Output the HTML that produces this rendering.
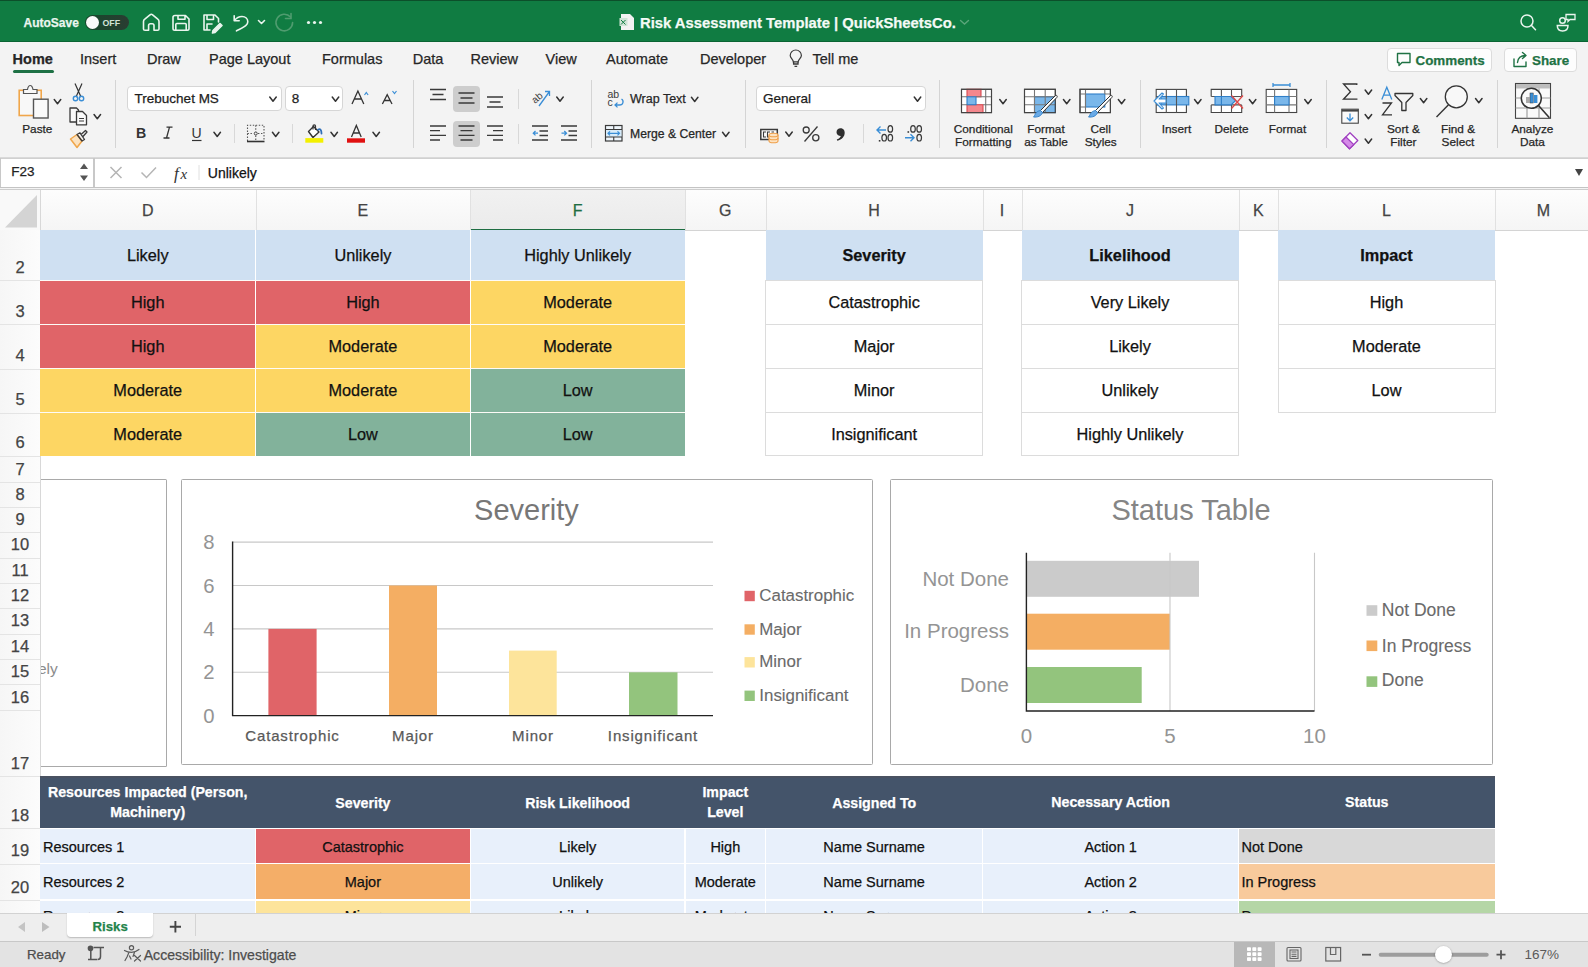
<!DOCTYPE html><html><head><meta charset="utf-8"><style>
html,body{margin:0;padding:0;}
body{width:1588px;height:967px;overflow:hidden;position:relative;background:#fff;font-family:"Liberation Sans",sans-serif;}
.t{position:absolute;white-space:nowrap;line-height:1;transform:translateY(-50%);-webkit-text-stroke:0.25px currentColor;}
.t.c{transform:translate(-50%,-50%);}
.t.r{transform:translate(-100%,-50%);}
svg{position:absolute;overflow:visible;}
</style></head><body>
<div style="position:absolute;left:0px;top:0px;width:1588px;height:42px;background:#107c42;"></div>
<div style="position:absolute;left:0px;top:0px;width:1588px;height:1px;background:#0c4f2a;"></div>
<div style="position:absolute;left:0px;top:41px;width:1588px;height:1px;background:#0a6433;"></div>
<div class="t" style="left:23.5px;top:22.5px;font-size:12px;color:#eaf5ee;font-weight:bold;">AutoSave</div>
<div style="position:absolute;left:85px;top:15px;width:44px;height:15px;background:linear-gradient(to right,#15482b,#2a3d32);border-radius:8px;"></div>
<div style="position:absolute;left:86px;top:16px;width:13px;height:13px;background:#fafafa;border-radius:50%;"></div>
<div class="t" style="left:102.5px;top:23px;font-size:8.8px;color:#d2e3d8;font-weight:bold;-webkit-text-stroke:0;">OFF</div>
<svg style="left:0;top:0" width="1588" height="42" viewBox="0 0 1588 42">
<g fill="none" stroke="#eaf5ee" stroke-width="1.6" stroke-linejoin="round" stroke-linecap="round">
 <path d="M143.5 21.5 C143.5 20.5 144 19.8 144.8 19.2 L150 14.8 C150.8 14.1 151.8 14.1 152.6 14.8 L157.8 19.2 C158.6 19.8 159 20.5 159 21.5 V29 C159 29.8 158.4 30.3 157.6 30.3 H154 V25.5 C154 24.5 153.2 23.8 152.2 23.8 H150.4 C149.4 23.8 148.6 24.5 148.6 25.5 V30.3 H145 C144.1 30.3 143.5 29.8 143.5 29 Z"/>
 <path d="M175 15.5 H185.5 L189 19 V28.5 C189 29.5 188.3 30.2 187.3 30.2 H174.7 C173.7 30.2 173 29.5 173 28.5 V17.2 C173 16.2 173.8 15.5 175 15.5 Z M178 15.5 V19.3 H185 V15.5 M175.8 30.2 V24.5 C175.8 23.9 176.2 23.5 176.8 23.5 H185.2 C185.8 23.5 186.2 23.9 186.2 24.5 V30.2"/>
 <path d="M204 15 H215 L218.5 18.5 V22 M204 15 V30 H210 M207 15 V19.5 H213.5 V15 M207 30 V24 H212"/>
 <path d="M213 30.5 L220 23.5 L222 25.5 L215 32.5 L212.5 33 Z" fill="#eaf5ee"/>
 <path d="M234.2 15.8 V20.8 H239.2 M234.5 20.5 C236.5 17.8 239 16.5 242 16.5 C245.5 16.5 247.8 18.8 247.8 21.8 C247.8 24.5 246 26.5 236.5 30.8"/>
 <path d="M258.5 20.5 L261.5 23.5 L264.5 20.5"/>
</g>
<g fill="none" stroke="#4f9c6f" stroke-width="1.6" stroke-linecap="round">
 <path d="M290.5 17 A8.3 8.3 0 1 0 292.6 22.6"/><path d="M285.5 18.5 H291 V13.5"/>
</g>
<g fill="#eaf5ee"><circle cx="308.5" cy="22.5" r="1.6"/><circle cx="314.5" cy="22.5" r="1.6"/><circle cx="320.5" cy="22.5" r="1.6"/></g>
<g fill="none" stroke="#eaf5ee" stroke-width="1.5" stroke-linecap="round">
 <circle cx="1527" cy="21" r="6"/><path d="M1531.3 25.3 L1535.5 29.8"/>
 <circle cx="1562.5" cy="20.5" r="2.8"/><path d="M1557.3 25.5 H1568 C1568 29 1566 31 1562.6 31 C1559.3 31 1557.3 29 1557.3 25.5 Z"/>
 <path d="M1566 14.5 H1575 V19.5 H1570 L1568 21.5 V19.5 H1566 Z" stroke-width="1.3"/>
</g>
<g>
 <path d="M621 14 H630 L634 18 V30 H621 Z" fill="#f2f2f2"/>
 <rect x="619.5" y="18" width="8" height="8" fill="#cfe3d6"/>
 <path d="M621 20 L625.5 24.5 M625.5 20 L621 24.5" stroke="#107c41" stroke-width="1"/>
</g>
<path d="M960.5 20.5 L964.5 24 L968.5 20.5" fill="none" stroke="#5aa57a" stroke-width="1.4" stroke-linecap="round"/>
</svg>
<div class="t" style="left:640px;top:23px;font-size:14.8px;color:#f4faf6;font-weight:bold;">Risk Assessment Template | QuickSheetsCo.</div>
<div style="position:absolute;left:0px;top:42px;width:1588px;height:115px;background:#f3f3f3;"></div>
<div style="position:absolute;left:0px;top:157px;width:1588px;height:1px;background:#d9d9d9;"></div>
<div class="t" style="left:12.6px;top:58.5px;font-size:14.5px;color:#262626;font-weight:bold;">Home</div>
<div class="t" style="left:80px;top:58.5px;font-size:14.5px;color:#262626;font-weight:normal;">Insert</div>
<div class="t" style="left:147px;top:58.5px;font-size:14.5px;color:#262626;font-weight:normal;">Draw</div>
<div class="t" style="left:209px;top:58.5px;font-size:14.5px;color:#262626;font-weight:normal;">Page Layout</div>
<div class="t" style="left:322px;top:58.5px;font-size:14.5px;color:#262626;font-weight:normal;">Formulas</div>
<div class="t" style="left:412.8px;top:58.5px;font-size:14.5px;color:#262626;font-weight:normal;">Data</div>
<div class="t" style="left:470.5px;top:58.5px;font-size:14.5px;color:#262626;font-weight:normal;">Review</div>
<div class="t" style="left:545.6px;top:58.5px;font-size:14.5px;color:#262626;font-weight:normal;">View</div>
<div class="t" style="left:606px;top:58.5px;font-size:14.5px;color:#262626;font-weight:normal;">Automate</div>
<div class="t" style="left:700px;top:58.5px;font-size:14.5px;color:#262626;font-weight:normal;">Developer</div>
<div style="position:absolute;left:12.5px;top:70px;width:41px;height:3px;background:#1e7145;border-radius:2px;"></div>
<div class="t" style="left:812.5px;top:58.5px;font-size:14.5px;color:#262626;font-weight:normal;">Tell me</div>
<div style="position:absolute;left:1387px;top:48px;width:105px;height:24px;background:#fdfdfd;border:1px solid #dcdcdc;border-radius:4px;box-sizing:border-box;"></div>
<div style="position:absolute;left:1504px;top:48px;width:72.5px;height:24px;background:#fdfdfd;border:1px solid #dcdcdc;border-radius:4px;box-sizing:border-box;"></div>
<div class="t" style="left:1415.5px;top:60.5px;font-size:13.4px;color:#1f7244;font-weight:bold;">Comments</div>
<div class="t" style="left:1532px;top:60.5px;font-size:13.4px;color:#1f7244;font-weight:bold;">Share</div>
<div style="position:absolute;left:115px;top:80px;width:1px;height:68px;background:#d4d4d4;"></div>
<div style="position:absolute;left:413px;top:80px;width:1px;height:68px;background:#d4d4d4;"></div>
<div style="position:absolute;left:591px;top:80px;width:1px;height:68px;background:#d4d4d4;"></div>
<div style="position:absolute;left:745px;top:80px;width:1px;height:68px;background:#d4d4d4;"></div>
<div style="position:absolute;left:939px;top:80px;width:1px;height:68px;background:#d4d4d4;"></div>
<div style="position:absolute;left:1140px;top:80px;width:1px;height:68px;background:#d4d4d4;"></div>
<div style="position:absolute;left:1326px;top:80px;width:1px;height:68px;background:#d4d4d4;"></div>
<div style="position:absolute;left:1497px;top:80px;width:1px;height:68px;background:#d4d4d4;"></div>
<div style="position:absolute;left:233.6px;top:124px;width:1px;height:19px;background:#d8d8d8;"></div>
<div style="position:absolute;left:291.7px;top:124px;width:1px;height:19px;background:#d8d8d8;"></div>
<div style="position:absolute;left:517.6px;top:89px;width:1px;height:20px;background:#d8d8d8;"></div>
<div style="position:absolute;left:517.6px;top:124px;width:1px;height:20px;background:#d8d8d8;"></div>
<div style="position:absolute;left:862.7px;top:124px;width:1px;height:19px;background:#d8d8d8;"></div>
<div style="position:absolute;left:127.3px;top:86px;width:154.3px;height:25px;background:#fff;border:1px solid #d6d6d6;border-radius:4px;box-sizing:border-box;"></div>
<div style="position:absolute;left:285px;top:86px;width:58px;height:25px;background:#fff;border:1px solid #d6d6d6;border-radius:4px;box-sizing:border-box;"></div>
<div style="position:absolute;left:756.4px;top:86px;width:170px;height:25px;background:#fff;border:1px solid #d6d6d6;border-radius:4px;box-sizing:border-box;"></div>
<div class="t" style="left:134.6px;top:98.5px;font-size:13.5px;color:#1d1d1d;font-weight:normal;">Trebuchet MS</div>
<div class="t" style="left:291.7px;top:98.5px;font-size:13.5px;color:#1d1d1d;font-weight:normal;">8</div>
<div class="t" style="left:763px;top:98.5px;font-size:13.5px;color:#1d1d1d;font-weight:normal;">General</div>
<div style="position:absolute;left:453px;top:85.5px;width:27px;height:26px;background:#cdcdcd;border-radius:4px;"></div>
<div style="position:absolute;left:453px;top:121px;width:27px;height:26px;background:#cdcdcd;border-radius:4px;"></div>
<div class="t c" style="left:37.3px;top:130px;font-size:11.8px;color:#262626;font-weight:normal;">Paste</div>
<div class="t c" style="left:983.3px;top:130px;font-size:11.8px;color:#262626;font-weight:normal;">Conditional</div>
<div class="t c" style="left:983.3px;top:143.3px;font-size:11.8px;color:#262626;font-weight:normal;">Formatting</div>
<div class="t c" style="left:1046px;top:130px;font-size:11.8px;color:#262626;font-weight:normal;">Format</div>
<div class="t c" style="left:1046px;top:143.3px;font-size:11.8px;color:#262626;font-weight:normal;">as Table</div>
<div class="t c" style="left:1100.7px;top:130px;font-size:11.8px;color:#262626;font-weight:normal;">Cell</div>
<div class="t c" style="left:1100.7px;top:143.3px;font-size:11.8px;color:#262626;font-weight:normal;">Styles</div>
<div class="t c" style="left:1176.5px;top:130px;font-size:11.8px;color:#262626;font-weight:normal;">Insert</div>
<div class="t c" style="left:1231.5px;top:130px;font-size:11.8px;color:#262626;font-weight:normal;">Delete</div>
<div class="t c" style="left:1287.5px;top:130px;font-size:11.8px;color:#262626;font-weight:normal;">Format</div>
<div class="t c" style="left:1403.4px;top:130px;font-size:11.8px;color:#262626;font-weight:normal;">Sort &amp;</div>
<div class="t c" style="left:1403.4px;top:143.3px;font-size:11.8px;color:#262626;font-weight:normal;">Filter</div>
<div class="t c" style="left:1458px;top:130px;font-size:11.8px;color:#262626;font-weight:normal;">Find &amp;</div>
<div class="t c" style="left:1458px;top:143.3px;font-size:11.8px;color:#262626;font-weight:normal;">Select</div>
<div class="t c" style="left:1532.4px;top:130px;font-size:11.8px;color:#262626;font-weight:normal;">Analyze</div>
<div class="t c" style="left:1532.4px;top:143.3px;font-size:11.8px;color:#262626;font-weight:normal;">Data</div>
<div class="t" style="left:630px;top:99px;font-size:12.5px;color:#262626;font-weight:normal;">Wrap Text</div>
<div class="t" style="left:630px;top:134px;font-size:12.2px;color:#262626;font-weight:normal;">Merge &amp; Center</div>
<svg style="left:0;top:0" width="1588" height="160" viewBox="0 0 1588 160">
<path d="M54.25 99.5 L57.5 103.7 L60.75 99.5" fill="none" stroke="#333" stroke-width="1.5" stroke-linecap="round" stroke-linejoin="round"/><path d="M94.05 114.5 L97.3 118.7 L100.55 114.5" fill="none" stroke="#333" stroke-width="1.5" stroke-linecap="round" stroke-linejoin="round"/><path d="M269.75 97 L273.0 101.2 L276.25 97" fill="none" stroke="#333" stroke-width="1.5" stroke-linecap="round" stroke-linejoin="round"/><path d="M332.25 97 L335.5 101.2 L338.75 97" fill="none" stroke="#333" stroke-width="1.5" stroke-linecap="round" stroke-linejoin="round"/><path d="M213.95 132.3 L217.2 136.5 L220.45 132.3" fill="none" stroke="#333" stroke-width="1.5" stroke-linecap="round" stroke-linejoin="round"/><path d="M272.45 132.3 L275.7 136.5 L278.95 132.3" fill="none" stroke="#333" stroke-width="1.5" stroke-linecap="round" stroke-linejoin="round"/><path d="M330.95 132.3 L334.2 136.5 L337.45 132.3" fill="none" stroke="#333" stroke-width="1.5" stroke-linecap="round" stroke-linejoin="round"/><path d="M372.95 132.3 L376.2 136.5 L379.45 132.3" fill="none" stroke="#333" stroke-width="1.5" stroke-linecap="round" stroke-linejoin="round"/><path d="M556.75 97 L560.0 101.2 L563.25 97" fill="none" stroke="#333" stroke-width="1.5" stroke-linecap="round" stroke-linejoin="round"/><path d="M691.45 97.3 L694.7 101.5 L697.95 97.3" fill="none" stroke="#333" stroke-width="1.5" stroke-linecap="round" stroke-linejoin="round"/><path d="M722.55 132.3 L725.8 136.5 L729.05 132.3" fill="none" stroke="#333" stroke-width="1.5" stroke-linecap="round" stroke-linejoin="round"/><path d="M914.25 97 L917.5 101.2 L920.75 97" fill="none" stroke="#333" stroke-width="1.5" stroke-linecap="round" stroke-linejoin="round"/><path d="M785.75 132 L789.0 136.2 L792.25 132" fill="none" stroke="#333" stroke-width="1.5" stroke-linecap="round" stroke-linejoin="round"/><path d="M999.75 99.5 L1003.0 103.7 L1006.25 99.5" fill="none" stroke="#333" stroke-width="1.5" stroke-linecap="round" stroke-linejoin="round"/><path d="M1063.45 99.5 L1066.7 103.7 L1069.95 99.5" fill="none" stroke="#333" stroke-width="1.5" stroke-linecap="round" stroke-linejoin="round"/><path d="M1118.35 99.5 L1121.6 103.7 L1124.85 99.5" fill="none" stroke="#333" stroke-width="1.5" stroke-linecap="round" stroke-linejoin="round"/><path d="M1194.55 99.5 L1197.8 103.7 L1201.05 99.5" fill="none" stroke="#333" stroke-width="1.5" stroke-linecap="round" stroke-linejoin="round"/><path d="M1249.35 99.5 L1252.6 103.7 L1255.85 99.5" fill="none" stroke="#333" stroke-width="1.5" stroke-linecap="round" stroke-linejoin="round"/><path d="M1304.75 99.5 L1308.0 103.7 L1311.25 99.5" fill="none" stroke="#333" stroke-width="1.5" stroke-linecap="round" stroke-linejoin="round"/><path d="M1365.15 90 L1368.4 94.2 L1371.65 90" fill="none" stroke="#333" stroke-width="1.5" stroke-linecap="round" stroke-linejoin="round"/><path d="M1365.15 114.5 L1368.4 118.7 L1371.65 114.5" fill="none" stroke="#333" stroke-width="1.5" stroke-linecap="round" stroke-linejoin="round"/><path d="M1365.15 139 L1368.4 143.2 L1371.65 139" fill="none" stroke="#333" stroke-width="1.5" stroke-linecap="round" stroke-linejoin="round"/><path d="M1420.35 98.5 L1423.6 102.7 L1426.85 98.5" fill="none" stroke="#333" stroke-width="1.5" stroke-linecap="round" stroke-linejoin="round"/><path d="M1475.55 98.5 L1478.8 102.7 L1482.05 98.5" fill="none" stroke="#333" stroke-width="1.5" stroke-linecap="round" stroke-linejoin="round"/>
<!-- tell me bulb -->
<g fill="none" stroke="#3a3a3a" stroke-width="1.2"><path d="M793.3 61.8 C793.3 59.8 790.2 58 790.2 55.6 A5.6 5.6 0 1 1 801.4 55.6 C801.4 58 798.2 59.8 798.2 61.8 Z"/><path d="M793.6 61.8 V64 H798 V61.8 M794.5 66.3 H797.2" stroke-width="1.3"/></g>
<!-- comments icon -->
<path d="M1397.5 53.5 H1410 V62.5 H1402 L1399 65.5 V62.5 H1397.5 Z" fill="none" stroke="#1f7244" stroke-width="1.4" stroke-linejoin="round"/>
<!-- share icon -->
<g fill="none" stroke="#1f7244" stroke-width="1.4" stroke-linejoin="round" stroke-linecap="round"><path d="M1514 59 V66.5 H1526 V62"/><path d="M1517.5 62.5 C1518 57.5 1521 55.5 1525.5 55.5 M1522.5 52.5 L1526 55.5 L1522.5 58.5"/></g>
<!-- paste -->
<rect x="19.2" y="90.3" width="22" height="25.2" fill="#f8f8f8" stroke="#f0a64a" stroke-width="1.6"/>
<path d="M23.5 93.5 V89.5 H27.5 C28 86.5 29 85.5 30.2 85.5 C31.4 85.5 32.4 86.5 33 89.5 H37 V93.5 Z" fill="#f8f8f8" stroke="#555" stroke-width="1.2"/>
<rect x="33.5" y="99.2" width="14.6" height="18.8" fill="#fafafa" stroke="#555" stroke-width="1.4"/>
<!-- scissors -->
<g fill="none" stroke-width="1.2"><path d="M75 83.5 L81 97 M82 83.5 L76 97" stroke="#333"/><circle cx="75.5" cy="98.5" r="2.2" stroke="#3a8ed6" stroke-width="1.4"/><circle cx="81.5" cy="98.5" r="2.2" stroke="#3a8ed6" stroke-width="1.4"/></g>
<!-- copy -->
<g fill="#fafafa" stroke="#3a3a3a" stroke-width="1.3" stroke-linejoin="round"><path d="M70 108 H76.5 L78.5 110 V122 H70 Z"/><path d="M76.5 111.5 H82.5 L86.5 115.5 V124.8 H76.5 Z"/><path d="M79 118.5 H84 M79 121 H84" stroke-width="1"/></g>
<!-- format painter -->
<path d="M70.5 139 L77 134.5 L82 141 L77 147.5 Z" fill="#fbe2c0" stroke="#f0a64a" stroke-width="1.5" stroke-linejoin="round"/>
<path d="M77 134.5 L80 132.8 L84.5 139.5 L82 141 Z M81 134.5 L85.5 130.5 L87 132 L83 136.5" fill="none" stroke="#3a3a3a" stroke-width="1.3" stroke-linejoin="round"/>
<!-- grow/shrink font -->
<path d="M352 104 L357.9 91 L363.8 104 M354.3 99 H361.5" fill="none" stroke="#333" stroke-width="1.3"/>
<path d="M364.5 95 L366.3 92.5 L368.1 95" fill="none" stroke="#3a8ed6" stroke-width="1.2"/>
<path d="M382.4 104 L387.2 94.6 L392 104 M384.2 100.5 H390.2" fill="none" stroke="#333" stroke-width="1.3"/>
<path d="M392.5 91 L394.5 93.5 L396.5 91" fill="none" stroke="#3a8ed6" stroke-width="1.2"/>
<!-- B I U -->
<text x="136" y="138.3" font-family="Liberation Sans" font-weight="bold" font-size="14.2" fill="#333">B</text>
<path d="M166.5 127.2 H172.5 M163.5 138 H169.5 M169.5 127.2 L166.5 138" fill="none" stroke="#333" stroke-width="1.3"/>
<text x="191.5" y="138" font-family="Liberation Sans" font-size="14" fill="#333">U</text>
<path d="M192 140.5 H201.5" stroke="#333" stroke-width="1.2"/>
<!-- borders -->
<g fill="none" stroke="#555" stroke-width="1.1" stroke-dasharray="1.4 1.6"><path d="M247.5 141 V125.3 H264 V141"/><path d="M255.75 125.3 V131.5 M255.75 135.5 V141 M247.5 133.5 H253.5 M258 133.5 H264"/></g>
<circle cx="255.75" cy="133.5" r="1.5" fill="none" stroke="#444" stroke-width="1"/>
<path d="M247 141.5 H264.5" stroke="#333" stroke-width="1.6"/>
<!-- fill color -->
<path d="M308.5 131.5 L313.5 126.5 L319 132 L313 137.5 Z" fill="#fff" stroke="#333" stroke-width="1.4" stroke-linejoin="round"/>
<path d="M313 129.5 V126 C313 124.5 315.5 124.5 315.5 126 V130" fill="none" stroke="#333" stroke-width="1.2"/>
<path d="M318 129.8 C320 128.3 321.5 129.5 321.5 133.5" fill="none" stroke="#2f6fb8" stroke-width="1.8" stroke-linecap="round"/>
<rect x="305.3" y="138.1" width="18" height="4.6" fill="#f3f000"/>
<!-- font color -->
<path d="M351.5 137 L356.35 125.5 L361.2 137 M353.3 133 H359.4" fill="none" stroke="#333" stroke-width="1.3"/>
<rect x="347" y="138.3" width="18" height="4.4" fill="#e01010"/>
<!-- align icons -->
<g stroke="#3a3a3a" stroke-width="1.3">
<path d="M430 89.5 H446 M432.5 94.5 H443.5 M430 99.5 H446"/>
<path d="M458.5 93 H474.5 M460.5 98 H472.5 M458.5 103 H474.5"/>
<path d="M487 97 H503 M489.5 102 H500.5 M487 107 H503"/>
<path d="M430 126 H446 M430 130.7 H440 M430 135.4 H446 M430 140 H440"/>
<path d="M458.5 126 H474.5 M460.5 130.7 H472.5 M458.5 135.4 H474.5 M460.5 140 H472.5"/>
<path d="M487 126 H503 M493 130.7 H503 M487 135.4 H503 M493 140 H503"/>
<path d="M532 126 H548 M539.5 131 H548 M539.5 135.5 H548 M532 140 H548"/>
<path d="M561 126 H577 M568.5 131 H577 M568.5 135.5 H577 M561 140 H577"/>
</g>
<g fill="none" stroke="#3a8ed6" stroke-width="1.3"><path d="M538 133.2 H533.5 M535.5 131 L533.3 133.2 L535.5 135.4"/><path d="M561.5 133.2 H566.5 M564.3 131 L566.5 133.2 L564.3 135.4"/></g>
<!-- orientation -->
<text x="531" y="101" font-family="Liberation Sans" font-size="10" fill="#3a3a3a" transform="rotate(-40 537 97)">ab</text>
<path d="M539 106 L549.5 91.5 M545 91.5 H549.5 V96" fill="none" stroke="#3a8ed6" stroke-width="1.3"/>
<!-- wrap text -->
<text x="607.5" y="98" font-family="Liberation Sans" font-size="10.5" fill="#3a3a3a">ab</text>
<text x="607.5" y="105.8" font-family="Liberation Sans" font-size="10.5" fill="#3a3a3a">c</text>
<path d="M621.5 99 C624 100.5 623.5 105 619.5 105 H615.2 M617.5 102.6 L615 105 L617.5 107.4" fill="none" stroke="#3a8ed6" stroke-width="1.3"/>
<!-- merge -->
<rect x="605.5" y="125.5" width="16.5" height="15.5" fill="#eef5fb" stroke="#3a3a3a" stroke-width="1.2"/>
<rect x="606" y="130" width="15.5" height="7" fill="#d8ecfa"/><path d="M605.5 129.5 H622 M605.5 137 H622 M613.75 125.5 V129.5 M613.75 137 V141" stroke="#3a3a3a" stroke-width="1.1"/>
<path d="M608 133.3 H619.5 M610 131.3 L608 133.3 L610 135.3 M617.5 131.3 L619.5 133.3 L617.5 135.3" fill="none" stroke="#3a8ed6" stroke-width="1.2"/>
<!-- number format icons -->
<rect x="760.8" y="129.5" width="16.5" height="10" fill="#fafafa" stroke="#3a3a3a" stroke-width="1.5"/>
<path d="M766 132 H763.5 V137 H766 M770 132 H767.5 V137 H770 M771.5 132 H774" fill="none" stroke="#3a3a3a" stroke-width="1.1"/>
<g fill="#fde3c2" stroke="#f0a04a" stroke-width="1.1"><path d="M769 135 V141 A4.5 1.8 0 0 0 778 141 V135"/><ellipse cx="773.5" cy="135" rx="4.5" ry="1.8"/><path d="M769 138 A4.5 1.8 0 0 0 778 138" fill="none"/></g>
<g fill="none" stroke="#3a3a3a" stroke-width="1.3"><circle cx="806.2" cy="130" r="3"/><circle cx="815.8" cy="137.8" r="3.1"/><path d="M817.5 126.5 L804.5 141.5"/></g>
<path d="M840.5 128.3 C843.5 128.3 844.7 130.5 844.7 132.8 C844.7 136.5 842 139.5 837.3 140.8 L836.8 139.6 C839.5 138.5 840.6 137 840.8 136 C838.5 136 836.5 134.5 836.5 132.2 C836.5 129.8 838.4 128.3 840.5 128.3 Z" fill="#2e2e2e"/>
<g fill="none" stroke="#3a3a3a" stroke-width="1.2">
<ellipse cx="890.3" cy="128.9" rx="2.3" ry="3.3"/>
<ellipse cx="884.2" cy="137.7" rx="2.3" ry="3.3"/><ellipse cx="890.3" cy="137.7" rx="2.3" ry="3.3"/>
<ellipse cx="913" cy="128.9" rx="2.3" ry="3.3"/><ellipse cx="919.2" cy="128.9" rx="2.3" ry="3.3"/>
<ellipse cx="919.2" cy="137.7" rx="2.3" ry="3.3"/>
</g>
<rect x="878.8" y="140" width="1.6" height="1.6" fill="#3a3a3a"/><rect x="907.5" y="131.2" width="1.6" height="1.6" fill="#3a3a3a"/>
<path d="M886 130 H877 M880.5 126.5 L877 130 L880.5 133.5" fill="none" stroke="#3a8ed6" stroke-width="1.4"/>
<path d="M905 137.7 H914 M910.5 134.2 L914 137.7 L910.5 141.2" fill="none" stroke="#3a8ed6" stroke-width="1.4"/>
<!-- conditional formatting -->
<g stroke-width="1.1">
<rect x="961.5" y="89.3" width="30" height="23.3" fill="#fff" stroke="#444"/>
<rect x="967" y="89.3" width="14" height="7.5" fill="#f4878d" stroke="#d84a50"/>
<rect x="967" y="104.7" width="16" height="7.9" fill="#f4878d" stroke="#d84a50"/>
<rect x="967" y="96.8" width="9" height="7.9" fill="#7ab7ea" stroke="#2f7fc8"/>
<path d="M961.5 96.8 H967 M961.5 104.7 H967 M976 96.8 H991.5 M983 104.7 H991.5 M985.7 89.3 V112.6" fill="none" stroke="#777"/>
<rect x="961.5" y="89.3" width="30" height="23.3" fill="none" stroke="#444"/>
</g>
<!-- format as table -->
<g stroke-width="1.1" fill="none">
<rect x="1024.5" y="89.3" width="30.8" height="23.3" fill="#fff" stroke="#444"/>
<rect x="1034.5" y="96.8" width="20.8" height="15.8" fill="#7ab7ea" stroke="#2f7fc8"/>
<path d="M1024.5 96.8 H1055.3 M1024.5 104.7 H1055.3 M1034.5 89.3 V112.6 M1045.2 89.3 V112.6" stroke="#777"/>
<rect x="1024.5" y="89.3" width="30.8" height="23.3" fill="none" stroke="#444"/>
</g>
<path d="M1040.5 110.5 L1055 96 C1056.5 94.5 1058 96 1056.8 97.5 L1042.5 112.5 Z" fill="#fff" stroke="#333" stroke-width="1"/>
<path d="M1040.5 110.5 L1042.5 112.5 C1041.5 116 1037.5 117.5 1033.5 117 C1035.5 115 1035 111.5 1040.5 110.5 Z" fill="#6aaae6" stroke="#2f7fc8" stroke-width="0.9"/>
<!-- cell styles -->
<g stroke-width="1.1" fill="none">
<rect x="1080" y="89.3" width="30.4" height="23.3" fill="#fff" stroke="#444"/>
<rect x="1085.5" y="94" width="19.3" height="13" fill="#7ab7ea" stroke="#2f7fc8"/>
<path d="M1080 94 H1085.5 M1104.8 94 H1110.4 M1080 107 H1085.5 M1085.5 89.3 V112.6 M1104.8 89.3 V94" stroke="#777"/>
<rect x="1080" y="89.3" width="30.4" height="23.3" fill="none" stroke="#444"/>
</g>
<path d="M1095.5 110.5 L1110 96 C1111.5 94.5 1113 96 1111.8 97.5 L1097.5 112.5 Z" fill="#fff" stroke="#333" stroke-width="1"/>
<path d="M1095.5 110.5 L1097.5 112.5 C1096.5 116 1092.5 117.5 1088.5 117 C1090.5 115 1090 111.5 1095.5 110.5 Z" fill="#6aaae6" stroke="#2f7fc8" stroke-width="0.9"/>
<!-- insert -->
<g stroke-width="1.1" fill="none">
<rect x="1156.2" y="89.4" width="30.2" height="23.1" fill="#fff" stroke="#444"/>
<rect x="1161" y="96.5" width="27.8" height="8.4" fill="#7ab7ea" stroke="#2f7fc8"/>
<path d="M1156.2 96.5 H1161 M1156.2 104.9 H1161 M1166.3 89.4 V112.5 M1176.5 89.4 V112.5" stroke="#555"/>
</g>
<path d="M1166 99 H1159 L1163.5 94 L1162 93 L1154 101 L1162 109 L1163.5 108 L1159 103 H1166 Z" fill="#fff" stroke="#3a8ed6" stroke-width="1.1" stroke-linejoin="round"/>
<!-- delete -->
<g stroke-width="1.1" fill="none">
<path d="M1211.2 96.5 V89.4 H1241.7 V96.5 M1211.2 104.9 V112.5 H1241.7 V104.9" fill="#fff" stroke="#444"/>
<path d="M1211.2 96.5 H1241.7 M1211.2 104.9 H1241.7 M1221.4 89.4 V112.5 M1231.5 89.4 V96.5 M1231.5 104.9 V112.5" stroke="#555"/>
<path d="M1215 96.5 H1231 L1235.5 100.7 L1231 104.9 H1215 Z" fill="#7ab7ea" stroke="#2f7fc8"/>
<path d="M1221.4 96.5 V104.9" stroke="#2f7fc8"/>
</g>
<path d="M1231.5 95.5 L1243 108.5 M1243 95.5 L1231.5 108.5" stroke="#e04848" stroke-width="1.3"/>
<!-- format -->
<g stroke-width="1.1" fill="none">
<rect x="1266.2" y="89.4" width="30.5" height="23.1" fill="#fff" stroke="#444"/>
<path d="M1266.2 96.5 H1296.7 M1266.2 104.9 H1296.7 M1274.6 89.4 V112.5 M1289 89.4 V112.5" stroke="#777"/>
<rect x="1274.6" y="96.5" width="14.4" height="8.4" fill="#7ab7ea" stroke="#2f7fc8"/>
</g>
<path d="M1273 85 H1290 M1273 83 V87 M1290 83 V87" stroke="#3a8ed6" stroke-width="1.3"/>
<!-- sigma, fill, clear -->
<path d="M1356.8 85 V84 H1343.5 L1350.5 91.8 L1343.5 99.2 H1356.8 V98.5" fill="none" stroke="#333" stroke-width="1.3" stroke-linejoin="miter"/>
<rect x="1341.8" y="109.2" width="16.5" height="14" fill="#fafafa" stroke="#444" stroke-width="1.1"/>
<path d="M1341.8 110.6 H1358.3" stroke="#444" stroke-width="2"/>
<path d="M1350 113.5 V120.5 M1346.8 117.5 L1350 120.8 L1353.2 117.5" fill="none" stroke="#3a8ed6" stroke-width="1.3"/>
<path d="M1342 141 L1350 132.8 L1357.8 140.5 L1349.5 148.8 Z" fill="#fff" stroke="#a040c0" stroke-width="1.3" stroke-linejoin="round"/>
<path d="M1342 141 L1346 137 L1353.8 144.6 L1349.5 148.8 Z" fill="#d58ae8" stroke="#a040c0" stroke-width="1.3" stroke-linejoin="round"/>
<!-- sort filter -->
<path d="M1381.8 99.5 L1386.8 87.3 L1391.8 99.5 M1383.6 95.2 H1390" fill="none" stroke="#3a8ed6" stroke-width="1.3"/>
<path d="M1382.5 103 H1391.5 L1382.5 114.8 H1392" fill="none" stroke="#333" stroke-width="1.3"/>
<path d="M1395 93.5 H1412.8 V95.5 L1406 102.5 V110.5 H1401.8 V102.5 L1395 95.5 Z" fill="none" stroke="#333" stroke-width="1.3" stroke-linejoin="round"/>
<!-- find -->
<circle cx="1456.3" cy="96.8" r="11" fill="#fff" fill-opacity="0.4" stroke="#333" stroke-width="1.3"/>
<path d="M1448.5 104.8 L1436.5 117" stroke="#333" stroke-width="1.4"/>
<!-- analyze data -->
<g stroke="#555" stroke-width="1.1" fill="none">
<rect x="1515.5" y="83.5" width="35" height="34.8" fill="#fafafa" stroke="#444"/>
<rect x="1516" y="84" width="34" height="4.5" fill="#bdbdbd" stroke="none"/>
<path d="M1515.5 98 H1550.5 M1515.5 108 H1550.5 M1527 88.5 V118.3 M1539 88.5 V118.3" stroke="#999"/>
</g>
<circle cx="1531.3" cy="98.3" r="10" fill="#fafafa" stroke="#333" stroke-width="1.5"/>
<path d="M1538.5 105.5 L1549.4 117.8" stroke="#333" stroke-width="1.6"/>
<rect x="1526" y="97" width="3.6" height="6" fill="#aaa"/><rect x="1530" y="93" width="3.2" height="10" fill="#3a8ed6" stroke="#333" stroke-width="0.5"/><rect x="1533.8" y="95" width="3.6" height="8" fill="#3a8ed6"/>
</svg>
<div style="position:absolute;left:0px;top:158px;width:1588px;height:30px;background:#fff;"></div>
<div style="position:absolute;left:0px;top:157.5px;width:1588px;height:1px;background:#d0d0d0;"></div>
<div style="position:absolute;left:93px;top:158px;width:1.5px;height:29px;background:#c8c8c8;"></div>
<div style="position:absolute;left:0px;top:186.5px;width:1588px;height:1.2px;background:#c4c4c4;"></div>
<div style="position:absolute;left:0px;top:187.7px;width:1588px;height:1px;background:#f4f4f4;"></div>
<div style="position:absolute;left:0px;top:188.7px;width:1588px;height:1.3px;background:#cdcdcd;"></div>
<div style="position:absolute;left:0px;top:158px;width:1px;height:29px;background:#c8c8c8;"></div>
<div class="t" style="left:11.3px;top:172.3px;font-size:13.5px;color:#222;font-weight:normal;">F23</div>
<svg style="left:0;top:0" width="1588" height="190" viewBox="0 0 1588 190">
<path d="M80 169 L84 163.5 L88 169 Z M80 175.5 L84 181 L88 175.5 Z" fill="#555"/>
<path d="M110.5 167 L121.5 178 M121.5 167 L110.5 178" stroke="#b5b5b5" stroke-width="1.5"/>
<path d="M141.5 172.5 L146.5 177.5 L156 167.5" fill="none" stroke="#b5b5b5" stroke-width="1.5"/>
<text x="174" y="178.5" font-family="Liberation Serif" font-style="italic" font-size="17" fill="#333">f</text>
<text x="180.5" y="178.5" font-family="Liberation Serif" font-style="italic" font-size="15" fill="#333">x</text>
<path d="M199 165 V180" stroke="#e0e0e0" stroke-width="1"/>
<path d="M1575 169 L1579 176 L1583 169 Z" fill="#444"/>
</svg>
<div class="t" style="left:207.8px;top:173px;font-size:14px;color:#111;font-weight:normal;">Unlikely</div>
<div style="position:absolute;left:0px;top:190px;width:1588px;height:40px;background:linear-gradient(#fdfdfd,#f5f5f5);"></div>
<div style="position:absolute;left:0px;top:229.5px;width:1588px;height:1px;background:#d4d4d4;"></div>
<div style="position:absolute;left:470.3px;top:190px;width:214.7px;height:40px;background:linear-gradient(#f1f1f1,#ebebeb);"></div>
<div style="position:absolute;left:470.3px;top:228.5px;width:214.7px;height:2.5px;background:#1e6d42;"></div>
<div style="position:absolute;left:255.5px;top:190px;width:1px;height:40px;background:#e1e1e1;"></div>
<div class="t c" style="left:147.75px;top:210.5px;font-size:16px;color:#444;font-weight:normal;">D</div>
<div style="position:absolute;left:470.3px;top:190px;width:1px;height:40px;background:#e1e1e1;"></div>
<div class="t c" style="left:362.9px;top:210.5px;font-size:16px;color:#444;font-weight:normal;">E</div>
<div style="position:absolute;left:685px;top:190px;width:1px;height:40px;background:#e1e1e1;"></div>
<div class="t c" style="left:577.65px;top:210.5px;font-size:16px;color:#1e6d42;font-weight:normal;">F</div>
<div style="position:absolute;left:765.6px;top:190px;width:1px;height:40px;background:#e1e1e1;"></div>
<div class="t c" style="left:725.3px;top:210.5px;font-size:16px;color:#444;font-weight:normal;">G</div>
<div style="position:absolute;left:982.7px;top:190px;width:1px;height:40px;background:#e1e1e1;"></div>
<div class="t c" style="left:874.1500000000001px;top:210.5px;font-size:16px;color:#444;font-weight:normal;">H</div>
<div style="position:absolute;left:1021.5px;top:190px;width:1px;height:40px;background:#e1e1e1;"></div>
<div class="t c" style="left:1002.1px;top:210.5px;font-size:16px;color:#444;font-weight:normal;">I</div>
<div style="position:absolute;left:1238.5px;top:190px;width:1px;height:40px;background:#e1e1e1;"></div>
<div class="t c" style="left:1130.0px;top:210.5px;font-size:16px;color:#444;font-weight:normal;">J</div>
<div style="position:absolute;left:1278px;top:190px;width:1px;height:40px;background:#e1e1e1;"></div>
<div class="t c" style="left:1258.25px;top:210.5px;font-size:16px;color:#444;font-weight:normal;">K</div>
<div style="position:absolute;left:1495px;top:190px;width:1px;height:40px;background:#e1e1e1;"></div>
<div class="t c" style="left:1386.5px;top:210.5px;font-size:16px;color:#444;font-weight:normal;">L</div>
<div style="position:absolute;left:1592px;top:190px;width:1px;height:40px;background:#e1e1e1;"></div>
<div class="t c" style="left:1543.5px;top:210.5px;font-size:16px;color:#444;font-weight:normal;">M</div>
<div style="position:absolute;left:0px;top:190px;width:40px;height:40px;background:#f9f9f9;"></div>
<div style="position:absolute;left:40px;top:190px;width:1px;height:1000px;background:#d8d8d8;"></div>
<svg style="left:0;top:0" width="40" height="230"><path d="M5 227.5 L37 195 V227.5 Z" fill="#d4d4d4"/></svg>
<div style="position:absolute;left:0px;top:230px;width:40px;height:683px;background:linear-gradient(to right,#f6f6f6,#fcfcfc);"></div>
<div style="position:absolute;left:0px;top:280.1px;width:40px;height:1px;background:#e4e4e4;"></div>
<div class="t c" style="left:20px;top:266.90000000000003px;font-size:16.5px;color:#444;font-weight:normal;">2</div>
<div style="position:absolute;left:0px;top:324.4px;width:40px;height:1px;background:#e4e4e4;"></div>
<div class="t c" style="left:20px;top:311.2px;font-size:16.5px;color:#444;font-weight:normal;">3</div>
<div style="position:absolute;left:0px;top:368.6px;width:40px;height:1px;background:#e4e4e4;"></div>
<div class="t c" style="left:20px;top:355.40000000000003px;font-size:16.5px;color:#444;font-weight:normal;">4</div>
<div style="position:absolute;left:0px;top:412.6px;width:40px;height:1px;background:#e4e4e4;"></div>
<div class="t c" style="left:20px;top:399.40000000000003px;font-size:16.5px;color:#444;font-weight:normal;">5</div>
<div style="position:absolute;left:0px;top:455.6px;width:40px;height:1px;background:#e4e4e4;"></div>
<div class="t c" style="left:20px;top:442.40000000000003px;font-size:16.5px;color:#444;font-weight:normal;">6</div>
<div style="position:absolute;left:0px;top:481.7px;width:40px;height:1px;background:#e4e4e4;"></div>
<div class="t c" style="left:20px;top:468.5px;font-size:16.5px;color:#444;font-weight:normal;">7</div>
<div style="position:absolute;left:0px;top:507px;width:40px;height:1px;background:#e4e4e4;"></div>
<div class="t c" style="left:20px;top:493.8px;font-size:16.5px;color:#444;font-weight:normal;">8</div>
<div style="position:absolute;left:0px;top:532px;width:40px;height:1px;background:#e4e4e4;"></div>
<div class="t c" style="left:20px;top:518.8px;font-size:16.5px;color:#444;font-weight:normal;">9</div>
<div style="position:absolute;left:0px;top:557.5px;width:40px;height:1px;background:#e4e4e4;"></div>
<div class="t c" style="left:20px;top:544.3px;font-size:16.5px;color:#444;font-weight:normal;">10</div>
<div style="position:absolute;left:0px;top:583px;width:40px;height:1px;background:#e4e4e4;"></div>
<div class="t c" style="left:20px;top:569.8px;font-size:16.5px;color:#444;font-weight:normal;">11</div>
<div style="position:absolute;left:0px;top:608px;width:40px;height:1px;background:#e4e4e4;"></div>
<div class="t c" style="left:20px;top:594.8px;font-size:16.5px;color:#444;font-weight:normal;">12</div>
<div style="position:absolute;left:0px;top:633.5px;width:40px;height:1px;background:#e4e4e4;"></div>
<div class="t c" style="left:20px;top:620.3px;font-size:16.5px;color:#444;font-weight:normal;">13</div>
<div style="position:absolute;left:0px;top:659px;width:40px;height:1px;background:#e4e4e4;"></div>
<div class="t c" style="left:20px;top:645.8px;font-size:16.5px;color:#444;font-weight:normal;">14</div>
<div style="position:absolute;left:0px;top:684px;width:40px;height:1px;background:#e4e4e4;"></div>
<div class="t c" style="left:20px;top:670.8px;font-size:16.5px;color:#444;font-weight:normal;">15</div>
<div style="position:absolute;left:0px;top:710px;width:40px;height:1px;background:#e4e4e4;"></div>
<div class="t c" style="left:20px;top:696.8px;font-size:16.5px;color:#444;font-weight:normal;">16</div>
<div style="position:absolute;left:0px;top:776.4px;width:40px;height:1px;background:#e4e4e4;"></div>
<div class="t c" style="left:20px;top:763.1999999999999px;font-size:16.5px;color:#444;font-weight:normal;">17</div>
<div style="position:absolute;left:0px;top:828.45px;width:40px;height:1px;background:#e4e4e4;"></div>
<div class="t c" style="left:20px;top:815.25px;font-size:16.5px;color:#444;font-weight:normal;">18</div>
<div style="position:absolute;left:0px;top:863.55px;width:40px;height:1px;background:#e4e4e4;"></div>
<div class="t c" style="left:20px;top:850.3499999999999px;font-size:16.5px;color:#444;font-weight:normal;">19</div>
<div style="position:absolute;left:0px;top:899.8px;width:40px;height:1px;background:#e4e4e4;"></div>
<div class="t c" style="left:20px;top:886.5999999999999px;font-size:16.5px;color:#444;font-weight:normal;">20</div>
<div style="position:absolute;left:0px;top:940px;width:40px;height:1px;background:#e4e4e4;"></div>
<div class="t c" style="left:20px;top:926.8px;font-size:16.5px;color:#444;font-weight:normal;">21</div>
<div style="position:absolute;left:40px;top:230px;width:215.5px;height:50.10000000000002px;background:#cfe0f2;"></div><div class="t c" style="left:147.75px;top:254.55px;font-size:16.3px;color:#111;font-weight:normal;">Likely</div>
<div style="position:absolute;left:255.5px;top:230px;width:214.8px;height:50.10000000000002px;background:#cfe0f2;"></div><div class="t c" style="left:362.9px;top:254.55px;font-size:16.3px;color:#111;font-weight:normal;">Unlikely</div>
<div style="position:absolute;left:470.3px;top:230px;width:214.7px;height:50.10000000000002px;background:#cfe0f2;"></div><div class="t c" style="left:577.65px;top:254.55px;font-size:16.3px;color:#111;font-weight:normal;">Highly Unlikely</div>
<div style="position:absolute;left:40px;top:280.1px;width:215.5px;height:44.299999999999955px;background:#e06468;"></div><div class="t c" style="left:147.75px;top:301.75px;font-size:16.3px;color:#111;font-weight:normal;">High</div>
<div style="position:absolute;left:255.5px;top:280.1px;width:214.8px;height:44.299999999999955px;background:#e06468;"></div><div class="t c" style="left:362.9px;top:301.75px;font-size:16.3px;color:#111;font-weight:normal;">High</div>
<div style="position:absolute;left:470.3px;top:280.1px;width:214.7px;height:44.299999999999955px;background:#fdd663;"></div><div class="t c" style="left:577.65px;top:301.75px;font-size:16.3px;color:#111;font-weight:normal;">Moderate</div>
<div style="position:absolute;left:40px;top:324.4px;width:215.5px;height:44.200000000000045px;background:#e06468;"></div><div class="t c" style="left:147.75px;top:346.0px;font-size:16.3px;color:#111;font-weight:normal;">High</div>
<div style="position:absolute;left:255.5px;top:324.4px;width:214.8px;height:44.200000000000045px;background:#fdd663;"></div><div class="t c" style="left:362.9px;top:346.0px;font-size:16.3px;color:#111;font-weight:normal;">Moderate</div>
<div style="position:absolute;left:470.3px;top:324.4px;width:214.7px;height:44.200000000000045px;background:#fdd663;"></div><div class="t c" style="left:577.65px;top:346.0px;font-size:16.3px;color:#111;font-weight:normal;">Moderate</div>
<div style="position:absolute;left:40px;top:368.6px;width:215.5px;height:44.0px;background:#fdd663;"></div><div class="t c" style="left:147.75px;top:390.1px;font-size:16.3px;color:#111;font-weight:normal;">Moderate</div>
<div style="position:absolute;left:255.5px;top:368.6px;width:214.8px;height:44.0px;background:#fdd663;"></div><div class="t c" style="left:362.9px;top:390.1px;font-size:16.3px;color:#111;font-weight:normal;">Moderate</div>
<div style="position:absolute;left:470.3px;top:368.6px;width:214.7px;height:44.0px;background:#82b29b;"></div><div class="t c" style="left:577.65px;top:390.1px;font-size:16.3px;color:#111;font-weight:normal;">Low</div>
<div style="position:absolute;left:40px;top:412.6px;width:215.5px;height:43.0px;background:#fdd663;"></div><div class="t c" style="left:147.75px;top:433.6px;font-size:16.3px;color:#111;font-weight:normal;">Moderate</div>
<div style="position:absolute;left:255.5px;top:412.6px;width:214.8px;height:43.0px;background:#82b29b;"></div><div class="t c" style="left:362.9px;top:433.6px;font-size:16.3px;color:#111;font-weight:normal;">Low</div>
<div style="position:absolute;left:470.3px;top:412.6px;width:214.7px;height:43.0px;background:#82b29b;"></div><div class="t c" style="left:577.65px;top:433.6px;font-size:16.3px;color:#111;font-weight:normal;">Low</div>
<div style="position:absolute;left:254.6px;top:230px;width:1.3px;height:225.6px;background:#fff;"></div>
<div style="position:absolute;left:469.65000000000003px;top:230px;width:1.3px;height:225.6px;background:#fff;"></div>
<div style="position:absolute;left:40px;top:279.5px;width:645px;height:1.2px;background:#fdfbf7;"></div>
<div style="position:absolute;left:40px;top:323.79999999999995px;width:645px;height:1.2px;background:#fdfbf7;"></div>
<div style="position:absolute;left:40px;top:368.0px;width:645px;height:1.2px;background:#fdfbf7;"></div>
<div style="position:absolute;left:40px;top:412.0px;width:645px;height:1.2px;background:#fdfbf7;"></div>
<div style="position:absolute;left:765.6px;top:230px;width:217.10000000000002px;height:50.10000000000002px;background:#cfe0f2;"></div>
<div class="t c" style="left:874.1500000000001px;top:254.55px;font-size:16.3px;color:#111;font-weight:bold;">Severity</div>
<div style="position:absolute;left:765.1px;top:279.6px;width:218.10000000000002px;height:45.299999999999955px;background:#fff;border:1px solid #dcdcdc;box-sizing:border-box;"></div>
<div class="t c" style="left:874.1500000000001px;top:301.75px;font-size:16.3px;color:#111;font-weight:normal;">Catastrophic</div>
<div style="position:absolute;left:765.1px;top:323.9px;width:218.10000000000002px;height:45.200000000000045px;background:#fff;border:1px solid #dcdcdc;box-sizing:border-box;"></div>
<div class="t c" style="left:874.1500000000001px;top:346.0px;font-size:16.3px;color:#111;font-weight:normal;">Major</div>
<div style="position:absolute;left:765.1px;top:368.1px;width:218.10000000000002px;height:45.0px;background:#fff;border:1px solid #dcdcdc;box-sizing:border-box;"></div>
<div class="t c" style="left:874.1500000000001px;top:390.1px;font-size:16.3px;color:#111;font-weight:normal;">Minor</div>
<div style="position:absolute;left:765.1px;top:412.1px;width:218.10000000000002px;height:44.0px;background:#fff;border:1px solid #dcdcdc;box-sizing:border-box;"></div>
<div class="t c" style="left:874.1500000000001px;top:433.6px;font-size:16.3px;color:#111;font-weight:normal;">Insignificant</div>
<div style="position:absolute;left:1021.5px;top:230px;width:217.0px;height:50.10000000000002px;background:#cfe0f2;"></div>
<div class="t c" style="left:1130.0px;top:254.55px;font-size:16.3px;color:#111;font-weight:bold;">Likelihood</div>
<div style="position:absolute;left:1021.0px;top:279.6px;width:218.0px;height:45.299999999999955px;background:#fff;border:1px solid #dcdcdc;box-sizing:border-box;"></div>
<div class="t c" style="left:1130.0px;top:301.75px;font-size:16.3px;color:#111;font-weight:normal;">Very Likely</div>
<div style="position:absolute;left:1021.0px;top:323.9px;width:218.0px;height:45.200000000000045px;background:#fff;border:1px solid #dcdcdc;box-sizing:border-box;"></div>
<div class="t c" style="left:1130.0px;top:346.0px;font-size:16.3px;color:#111;font-weight:normal;">Likely</div>
<div style="position:absolute;left:1021.0px;top:368.1px;width:218.0px;height:45.0px;background:#fff;border:1px solid #dcdcdc;box-sizing:border-box;"></div>
<div class="t c" style="left:1130.0px;top:390.1px;font-size:16.3px;color:#111;font-weight:normal;">Unlikely</div>
<div style="position:absolute;left:1021.0px;top:412.1px;width:218.0px;height:44.0px;background:#fff;border:1px solid #dcdcdc;box-sizing:border-box;"></div>
<div class="t c" style="left:1130.0px;top:433.6px;font-size:16.3px;color:#111;font-weight:normal;">Highly Unlikely</div>
<div style="position:absolute;left:1278px;top:230px;width:217px;height:50.10000000000002px;background:#cfe0f2;"></div>
<div class="t c" style="left:1386.5px;top:254.55px;font-size:16.3px;color:#111;font-weight:bold;">Impact</div>
<div style="position:absolute;left:1277.5px;top:279.6px;width:218px;height:45.299999999999955px;background:#fff;border:1px solid #dcdcdc;box-sizing:border-box;"></div>
<div class="t c" style="left:1386.5px;top:301.75px;font-size:16.3px;color:#111;font-weight:normal;">High</div>
<div style="position:absolute;left:1277.5px;top:323.9px;width:218px;height:45.200000000000045px;background:#fff;border:1px solid #dcdcdc;box-sizing:border-box;"></div>
<div class="t c" style="left:1386.5px;top:346.0px;font-size:16.3px;color:#111;font-weight:normal;">Moderate</div>
<div style="position:absolute;left:1277.5px;top:368.1px;width:218px;height:45.0px;background:#fff;border:1px solid #dcdcdc;box-sizing:border-box;"></div>
<div class="t c" style="left:1386.5px;top:390.1px;font-size:16.3px;color:#111;font-weight:normal;">Low</div>
<div style="position:absolute;left:40px;top:776.4px;width:1455px;height:52.05000000000007px;background:#44546a;"></div>
<div style="position:absolute;left:40px;top:776.4px;width:1455px;height:1.2px;background:#4a5261;"></div>
<div class="t c" style="left:147.7px;top:791.5px;font-size:14.2px;color:#ffffff;font-weight:bold;">Resources Impacted (Person,</div>
<div class="t c" style="left:147.7px;top:811.5px;font-size:14.2px;color:#ffffff;font-weight:bold;">Machinery)</div>
<div class="t c" style="left:362.9px;top:802.5px;font-size:14.2px;color:#ffffff;font-weight:bold;">Severity</div>
<div class="t c" style="left:577.6px;top:802.5px;font-size:14.2px;color:#ffffff;font-weight:bold;">Risk Likelihood</div>
<div class="t c" style="left:725.3px;top:791.5px;font-size:14.2px;color:#ffffff;font-weight:bold;">Impact</div>
<div class="t c" style="left:725.3px;top:811.5px;font-size:14.2px;color:#ffffff;font-weight:bold;">Level</div>
<div class="t c" style="left:874.2px;top:802.5px;font-size:14.2px;color:#ffffff;font-weight:bold;">Assigned To</div>
<div class="t c" style="left:1110.6px;top:801.5px;font-size:14.2px;color:#ffffff;font-weight:bold;">Necessary Action</div>
<div class="t c" style="left:1366.8px;top:801.5px;font-size:14.2px;color:#ffffff;font-weight:bold;">Status</div>
<div style="position:absolute;left:40px;top:828.45px;width:215.5px;height:35.09999999999991px;background:#e8f0fb;"></div><div class="t" style="left:43px;top:846.5px;font-size:14.5px;color:#111;font-weight:normal;">Resources 1</div>
<div style="position:absolute;left:255.5px;top:828.45px;width:214.8px;height:35.09999999999991px;background:#e06468;"></div><div class="t c" style="left:362.9px;top:846.5px;font-size:14.5px;color:#111;font-weight:normal;">Catastrophic</div>
<div style="position:absolute;left:470.3px;top:828.45px;width:214.7px;height:35.09999999999991px;background:#e8f0fb;"></div><div class="t c" style="left:577.65px;top:846.5px;font-size:14.5px;color:#111;font-weight:normal;">Likely</div>
<div style="position:absolute;left:685px;top:828.45px;width:80.60000000000002px;height:35.09999999999991px;background:#e8f0fb;"></div><div class="t c" style="left:725.3px;top:846.5px;font-size:14.5px;color:#111;font-weight:normal;">High</div>
<div style="position:absolute;left:765.6px;top:828.45px;width:217.10000000000002px;height:35.09999999999991px;background:#e8f0fb;"></div><div class="t c" style="left:874.1500000000001px;top:846.5px;font-size:14.5px;color:#111;font-weight:normal;">Name Surname</div>
<div style="position:absolute;left:982.7px;top:828.45px;width:255.79999999999995px;height:35.09999999999991px;background:#e8f0fb;"></div><div class="t c" style="left:1110.6px;top:846.5px;font-size:14.5px;color:#111;font-weight:normal;">Action 1</div>
<div style="position:absolute;left:1238.5px;top:828.45px;width:256.5px;height:35.09999999999991px;background:#d8d8d8;"></div><div class="t" style="left:1241.5px;top:846.5px;font-size:14.5px;color:#111;font-weight:normal;">Not Done</div>
<div style="position:absolute;left:40px;top:863.55px;width:215.5px;height:36.25px;background:#e8f0fb;"></div><div class="t" style="left:43px;top:882.175px;font-size:14.5px;color:#111;font-weight:normal;">Resources 2</div>
<div style="position:absolute;left:255.5px;top:863.55px;width:214.8px;height:36.25px;background:#f4ae68;"></div><div class="t c" style="left:362.9px;top:882.175px;font-size:14.5px;color:#111;font-weight:normal;">Major</div>
<div style="position:absolute;left:470.3px;top:863.55px;width:214.7px;height:36.25px;background:#e8f0fb;"></div><div class="t c" style="left:577.65px;top:882.175px;font-size:14.5px;color:#111;font-weight:normal;">Unlikely</div>
<div style="position:absolute;left:685px;top:863.55px;width:80.60000000000002px;height:36.25px;background:#e8f0fb;"></div><div class="t c" style="left:725.3px;top:882.175px;font-size:14.5px;color:#111;font-weight:normal;">Moderate</div>
<div style="position:absolute;left:765.6px;top:863.55px;width:217.10000000000002px;height:36.25px;background:#e8f0fb;"></div><div class="t c" style="left:874.1500000000001px;top:882.175px;font-size:14.5px;color:#111;font-weight:normal;">Name Surname</div>
<div style="position:absolute;left:982.7px;top:863.55px;width:255.79999999999995px;height:36.25px;background:#e8f0fb;"></div><div class="t c" style="left:1110.6px;top:882.175px;font-size:14.5px;color:#111;font-weight:normal;">Action 2</div>
<div style="position:absolute;left:1238.5px;top:863.55px;width:256.5px;height:36.25px;background:#f8ca9c;"></div><div class="t" style="left:1241.5px;top:882.175px;font-size:14.5px;color:#111;font-weight:normal;">In Progress</div>
<div style="position:absolute;left:40px;top:899.8px;width:215.5px;height:40.200000000000045px;background:#e8f0fb;"></div><div class="t" style="left:43px;top:915.6px;font-size:14.5px;color:#111;font-weight:normal;">Resources 3</div>
<div style="position:absolute;left:255.5px;top:899.8px;width:214.8px;height:40.200000000000045px;background:#fde49b;"></div><div class="t c" style="left:362.9px;top:915.6px;font-size:14.5px;color:#111;font-weight:normal;">Minor</div>
<div style="position:absolute;left:470.3px;top:899.8px;width:214.7px;height:40.200000000000045px;background:#e8f0fb;"></div><div class="t c" style="left:577.65px;top:915.6px;font-size:14.5px;color:#111;font-weight:normal;">Likely</div>
<div style="position:absolute;left:685px;top:899.8px;width:80.60000000000002px;height:40.200000000000045px;background:#e8f0fb;"></div><div class="t c" style="left:725.3px;top:915.6px;font-size:14.5px;color:#111;font-weight:normal;">Moderate</div>
<div style="position:absolute;left:765.6px;top:899.8px;width:217.10000000000002px;height:40.200000000000045px;background:#e8f0fb;"></div><div class="t c" style="left:874.1500000000001px;top:915.6px;font-size:14.5px;color:#111;font-weight:normal;">Name Surname</div>
<div style="position:absolute;left:982.7px;top:899.8px;width:255.79999999999995px;height:40.200000000000045px;background:#e8f0fb;"></div><div class="t c" style="left:1110.6px;top:915.6px;font-size:14.5px;color:#111;font-weight:normal;">Action 3</div>
<div style="position:absolute;left:1238.5px;top:899.8px;width:256.5px;height:40.200000000000045px;background:#b5d6a6;"></div><div class="t" style="left:1241.5px;top:915.6px;font-size:14.5px;color:#111;font-weight:normal;">Done</div>
<div style="position:absolute;left:254.75px;top:828.45px;width:1.5px;height:120px;background:#fff;"></div>
<div style="position:absolute;left:469.55px;top:828.45px;width:1.5px;height:120px;background:#fff;"></div>
<div style="position:absolute;left:684.25px;top:828.45px;width:1.5px;height:120px;background:#fff;"></div>
<div style="position:absolute;left:764.85px;top:828.45px;width:1.5px;height:120px;background:#fff;"></div>
<div style="position:absolute;left:981.95px;top:828.45px;width:1.5px;height:120px;background:#fff;"></div>
<div style="position:absolute;left:1237.75px;top:828.45px;width:1.5px;height:120px;background:#fff;"></div>
<div style="position:absolute;left:40px;top:827.7px;width:1455px;height:1.5px;background:#fff;"></div>
<div style="position:absolute;left:40px;top:862.8px;width:1455px;height:1.5px;background:#fff;"></div>
<div style="position:absolute;left:40px;top:899.05px;width:1455px;height:1.5px;background:#fff;"></div>
<div style="position:absolute;left:41px;top:479.05px;width:125.6px;height:288.3px;background:#fff;border:1.5px solid #a9a9a9;border-left:none;box-sizing:border-box;border-radius:0 1.5px 1.5px 0;"></div>
<div style="position:absolute;left:41px;top:640px;width:60px;height:60px;overflow:hidden;"><div class="t" style="left:-3px;top:29.3px;font-size:15.5px;color:#8c8c8c;font-weight:normal;-webkit-text-stroke:0;">ely</div></div>
<div style="position:absolute;left:181.25px;top:479.05px;width:691.8px;height:286px;background:#fff;border:1.5px solid #a9a9a9;box-sizing:border-box;border-radius:1.5px;"></div>
<div class="t c" style="left:526.5px;top:510px;font-size:29px;color:#777;font-weight:normal;-webkit-text-stroke:0;">Severity</div>
<div style="position:absolute;left:890.25px;top:479.05px;width:602.6px;height:286px;background:#fff;border:1.5px solid #a9a9a9;box-sizing:border-box;border-radius:1.5px;"></div>
<svg style="left:0;top:0" width="1588" height="967"><path d="M232.6 542.1 H713" stroke="#c8c8c8" stroke-width="1.1"/><path d="M232.6 585.5 H713" stroke="#c8c8c8" stroke-width="1.1"/><path d="M232.6 628.9 H713" stroke="#c8c8c8" stroke-width="1.1"/><path d="M232.6 672.3 H713" stroke="#c8c8c8" stroke-width="1.1"/><path d="M232.6 541.5 V715.6 H713" fill="none" stroke="#222" stroke-width="1.4"/><rect x="268.4" y="628.9" width="48.200000000000045" height="86.10000000000002" fill="#e06468"/><rect x="389" y="585.5" width="48" height="129.5" fill="#f4ae63"/><rect x="509" y="650.6" width="47.700000000000045" height="64.39999999999998" fill="#fde49b"/><rect x="629" y="672.3" width="48.5" height="42.700000000000045" fill="#93c47d"/><rect x="744.5" y="590.8" width="10.3" height="10.4" fill="#e06468"/><rect x="744.5" y="624.3" width="10.3" height="10.4" fill="#f4ae63"/><rect x="744.5" y="657.0999999999999" width="10.3" height="10.4" fill="#fde49b"/><rect x="744.5" y="690.5999999999999" width="10.3" height="10.4" fill="#93c47d"/><rect x="1026.4" y="560.8" width="172.5999999999999" height="36" fill="#cbcbcb"/><rect x="1026.4" y="613.7" width="143.5999999999999" height="36" fill="#f4ae63"/><rect x="1026.4" y="667" width="115.29999999999995" height="36" fill="#93c47d"/><path d="M1170 552.7 V711 M1314.5 552.7 V711" stroke="#c8c8c8" stroke-width="1.1"/><path d="M1026.4 552.7 V711 H1314.5" fill="none" stroke="#222" stroke-width="1.4"/><rect x="1366.5" y="605.2" width="10.8" height="10.6" fill="#cbcbcb"/><rect x="1366.5" y="640.5" width="10.8" height="10.6" fill="#f4ae63"/><rect x="1366.5" y="676.3000000000001" width="10.8" height="10.6" fill="#93c47d"/></svg>
<div class="t c" style="left:209px;top:542.1px;font-size:20.3px;color:#949494;font-weight:normal;-webkit-text-stroke:0;">8</div>
<div class="t c" style="left:209px;top:585.5px;font-size:20.3px;color:#949494;font-weight:normal;-webkit-text-stroke:0;">6</div>
<div class="t c" style="left:209px;top:628.9px;font-size:20.3px;color:#949494;font-weight:normal;-webkit-text-stroke:0;">4</div>
<div class="t c" style="left:209px;top:672.3px;font-size:20.3px;color:#949494;font-weight:normal;-webkit-text-stroke:0;">2</div>
<div class="t c" style="left:209px;top:715.6px;font-size:20.3px;color:#949494;font-weight:normal;-webkit-text-stroke:0;">0</div>
<div class="t c" style="left:292.5px;top:735px;font-size:15px;color:#595959;font-weight:normal;letter-spacing:0.85px;">Catastrophic</div>
<div class="t c" style="left:413px;top:735px;font-size:15px;color:#595959;font-weight:normal;letter-spacing:0.85px;">Major</div>
<div class="t c" style="left:533px;top:735px;font-size:15px;color:#595959;font-weight:normal;letter-spacing:0.85px;">Minor</div>
<div class="t c" style="left:653px;top:735px;font-size:15px;color:#595959;font-weight:normal;letter-spacing:0.85px;">Insignificant</div>
<div class="t" style="left:759.3px;top:596px;font-size:16.9px;color:#6a6a6a;font-weight:normal;-webkit-text-stroke:0.1px;">Catastrophic</div>
<div class="t" style="left:759.3px;top:629.5px;font-size:16.9px;color:#6a6a6a;font-weight:normal;-webkit-text-stroke:0.1px;">Major</div>
<div class="t" style="left:759.3px;top:662.3px;font-size:16.9px;color:#6a6a6a;font-weight:normal;-webkit-text-stroke:0.1px;">Minor</div>
<div class="t" style="left:759.3px;top:695.8px;font-size:16.9px;color:#6a6a6a;font-weight:normal;-webkit-text-stroke:0.1px;">Insignificant</div>
<div class="t c" style="left:1191px;top:509.7px;font-size:29px;color:#858585;font-weight:normal;-webkit-text-stroke:0;">Status Table</div>
<div class="t r" style="left:1009px;top:578.5px;font-size:20.5px;color:#949494;font-weight:normal;-webkit-text-stroke:0;">Not Done</div>
<div class="t r" style="left:1009px;top:631.4px;font-size:20.5px;color:#949494;font-weight:normal;-webkit-text-stroke:0;">In Progress</div>
<div class="t r" style="left:1009px;top:684.7px;font-size:20.5px;color:#949494;font-weight:normal;-webkit-text-stroke:0;">Done</div>
<div class="t c" style="left:1026.4px;top:735.8px;font-size:20.5px;color:#949494;font-weight:normal;-webkit-text-stroke:0;">0</div>
<div class="t c" style="left:1170px;top:735.8px;font-size:20.5px;color:#949494;font-weight:normal;-webkit-text-stroke:0;">5</div>
<div class="t c" style="left:1314.5px;top:735.8px;font-size:20.5px;color:#949494;font-weight:normal;-webkit-text-stroke:0;">10</div>
<div class="t" style="left:1381.8px;top:610.7px;font-size:17.5px;color:#6a6a6a;font-weight:normal;-webkit-text-stroke:0.1px;">Not Done</div>
<div class="t" style="left:1381.8px;top:646.6px;font-size:17.5px;color:#6a6a6a;font-weight:normal;-webkit-text-stroke:0.1px;">In Progress</div>
<div class="t" style="left:1381.8px;top:681.3px;font-size:17.5px;color:#6a6a6a;font-weight:normal;-webkit-text-stroke:0.1px;">Done</div>
<div style="position:absolute;left:0px;top:912.8px;width:1588px;height:29px;background:#eeeeee;border-top:1px solid #d2d2d2;box-sizing:border-box;"></div>
<div style="position:absolute;left:67px;top:912.8px;width:86.3px;height:24.4px;background:#fff;border-radius:0 0 4px 4px;box-shadow:0 1px 1.5px rgba(0,0,0,0.22);"></div>
<div class="t c" style="left:110.2px;top:927px;font-size:13.2px;color:#23834a;font-weight:bold;">Risks</div>
<div style="position:absolute;left:195px;top:913px;width:1px;height:22.6px;background:#d4d4d4;"></div>
<div style="position:absolute;left:0px;top:941.2px;width:1588px;height:25.8px;background:#e3e3e3;border-top:1.2px solid #c8c8c8;box-sizing:border-box;"></div>
<div class="t" style="left:27px;top:954.5px;font-size:13.3px;color:#4d4d4d;font-weight:normal;">Ready</div>
<div class="t" style="left:143.7px;top:954.5px;font-size:14.1px;color:#4d4d4d;font-weight:normal;">Accessibility: Investigate</div>
<div style="position:absolute;left:1234.4px;top:942px;width:40.6px;height:25px;background:#b8b8b8;"></div>
<div class="t r" style="left:1559px;top:954.5px;font-size:13.5px;color:#5a5a5a;font-weight:normal;-webkit-text-stroke:0;">167%</div>
<svg style="left:0;top:0" width="1588" height="967">
<path d="M25 922 L18 927 L25 932 Z" fill="#c4c4c4"/><path d="M42 922 L49.5 927 L42 932 Z" fill="#bdbdbd"/>
<path d="M169.8 926.7 H181 M175.4 921 V932.4" stroke="#444" stroke-width="1.9"/>
<g fill="none" stroke="#555" stroke-width="1.5"><circle cx="90.5" cy="948.3" r="2.1" fill="#555"/><path d="M90.8 950 V959.3 M88 959.6 H97 M93.5 947.5 H104 M100.5 947.5 V956.5 C100.5 958.5 99.5 959.6 97.5 959.6"/></g>
<g fill="none" stroke="#5a5a5a" stroke-width="1.2" stroke-linecap="round" stroke-linejoin="round"><circle cx="131.5" cy="947.8" r="2.1"/><path d="M124.5 950.5 C127 952 129 952.3 131.5 952.3 C134 952.3 136.5 951.5 139 949.5 M129 952.3 L127 957 L125 960.5 M129.5 956 L131 959 M134.5 952.3 L133 956.5 M134.5 955.5 L140.5 961 M140.5 955.5 L134.5 961"/></g>
<rect x="1247.0" y="947.3" width="4" height="3.8" rx="0.8" fill="#fff"/><rect x="1247.0" y="952.3" width="4" height="3.8" rx="0.8" fill="#fff"/><rect x="1247.0" y="957.3" width="4" height="3.8" rx="0.8" fill="#fff"/><rect x="1252.3" y="947.3" width="4" height="3.8" rx="0.8" fill="#fff"/><rect x="1252.3" y="952.3" width="4" height="3.8" rx="0.8" fill="#fff"/><rect x="1252.3" y="957.3" width="4" height="3.8" rx="0.8" fill="#fff"/><rect x="1257.6" y="947.3" width="4" height="3.8" rx="0.8" fill="#fff"/><rect x="1257.6" y="952.3" width="4" height="3.8" rx="0.8" fill="#fff"/><rect x="1257.6" y="957.3" width="4" height="3.8" rx="0.8" fill="#fff"/>
<g fill="none" stroke="#666" stroke-width="1.1"><rect x="1287" y="947.5" width="14" height="13.5" rx="1"/><rect x="1290" y="950" width="8" height="8.5"/><path d="M1291.5 952 H1296.5 M1291.5 954.2 H1296.5 M1291.5 956.4 H1296.5"/></g>
<g fill="none" stroke="#666" stroke-width="1.2"><rect x="1325.8" y="947.5" width="14.8" height="13.5"/><path d="M1330.5 947.5 V954.5 H1335.8 V947.5"/></g>
<path d="M1362 954.7 H1371" stroke="#555" stroke-width="1.8"/>
<rect x="1378.7" y="952.7" width="110" height="4" rx="2" fill="#9d9d9d"/>
<path d="M1496.5 954.7 H1505.5 M1501 950.2 V959.2" stroke="#555" stroke-width="1.8"/>
</svg>
<div style="position:absolute;left:1435px;top:946px;width:17px;height:17px;background:#fff;border-radius:50%;box-shadow:0 0.5px 2px rgba(0,0,0,0.35);"></div>
</body></html>
